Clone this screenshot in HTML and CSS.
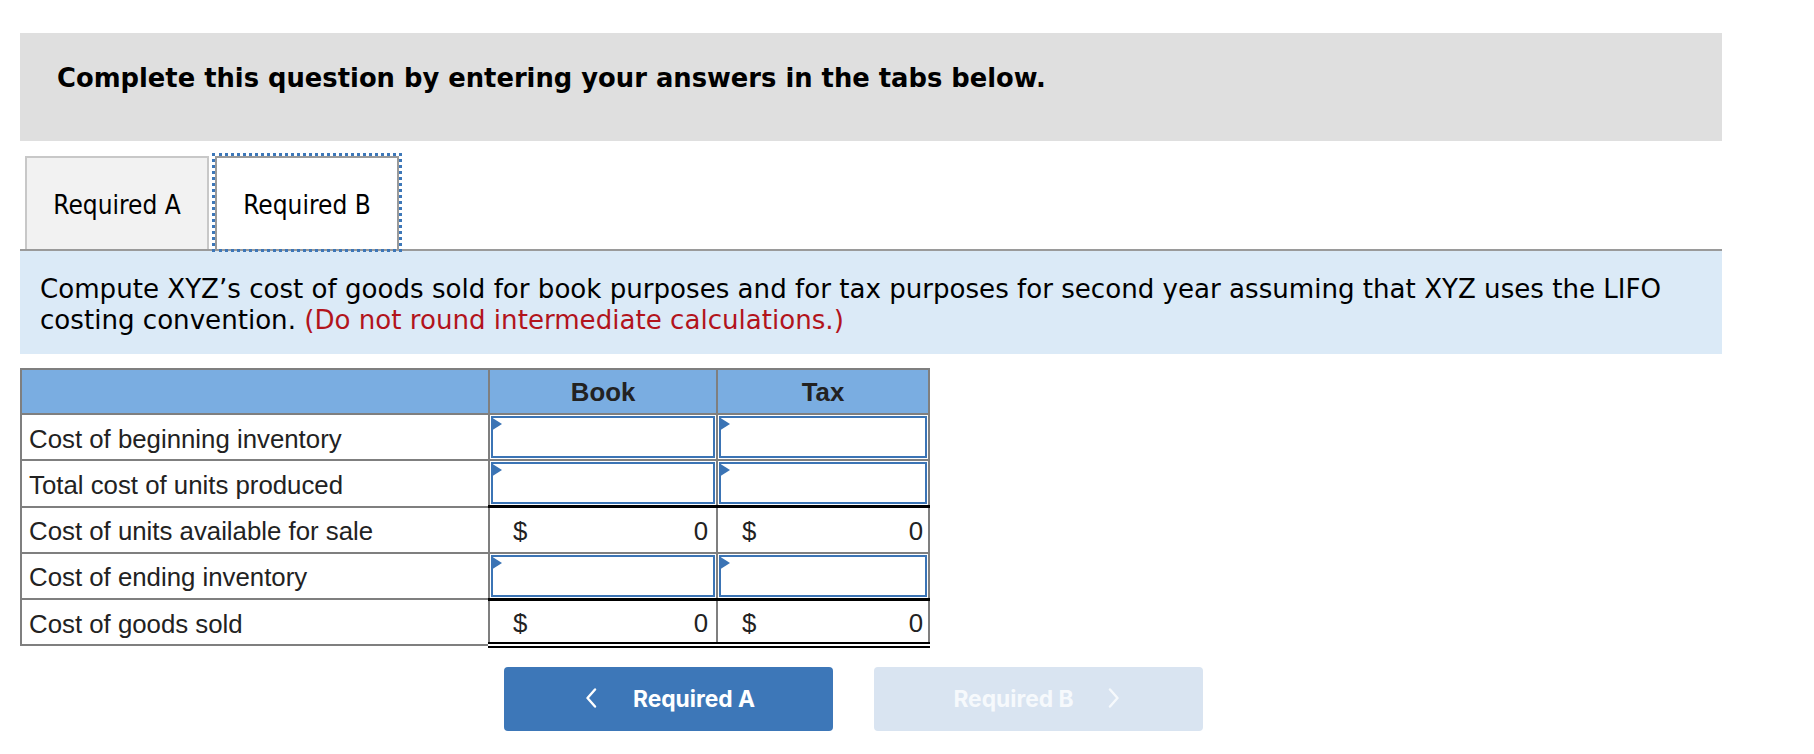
FILE: index.html
```html
<!DOCTYPE html>
<html lang="en">
<head>
<meta charset="utf-8">
<title>Required B</title>
<link rel="stylesheet" href="styles.css">
</head>
<body>
<div class="page">
  <div class="banner">Complete this question by entering your answers in the tabs below.</div>

  <div class="tabs">
    <div class="tab tab-inactive">Required A</div>
    <div class="tab tab-active">Required B</div>
  </div>

  <div class="instructions">
    Compute XYZ’s cost of goods sold for book purposes and for tax purposes for second year assuming that XYZ uses the LIFO costing convention. <span class="note">(Do not round intermediate calculations.)</span>
  </div>

  <table class="grid">
    <colgroup>
      <col class="c-label">
      <col class="c-book">
      <col class="c-tax">
    </colgroup>
    <thead>
      <tr class="head-row">
        <th></th>
        <th>Book</th>
        <th>Tax</th>
      </tr>
    </thead>
    <tbody>
      <tr>
        <td class="label">Cost of beginning inventory</td>
        <td class="in-cell"><div class="input"><span class="flag"></span></div></td>
        <td class="in-cell"><div class="input"><span class="flag"></span></div></td>
      </tr>
      <tr>
        <td class="label">Total cost of units produced</td>
        <td class="in-cell"><div class="input"><span class="flag"></span></div></td>
        <td class="in-cell"><div class="input"><span class="flag"></span></div></td>
      </tr>
      <tr>
        <td class="label">Cost of units available for sale</td>
        <td class="total book"><div class="amt"><span>$</span><span>0</span></div></td>
        <td class="total tax"><div class="amt"><span>$</span><span>0</span></div></td>
      </tr>
      <tr>
        <td class="label">Cost of ending inventory</td>
        <td class="in-cell"><div class="input"><span class="flag"></span></div></td>
        <td class="in-cell"><div class="input"><span class="flag"></span></div></td>
      </tr>
      <tr>
        <td class="label">Cost of goods sold</td>
        <td class="total final book"><div class="amt"><span>$</span><span>0</span></div></td>
        <td class="total final tax"><div class="amt"><span>$</span><span>0</span></div></td>
      </tr>
    </tbody>
  </table>

  <div class="nav">
    <button class="nav-btn prev" type="button">
      <svg class="chev" width="12" height="20" viewBox="0 0 12 20"><polyline points="10,1.5 2.5,10 10,18.5" fill="none" stroke="currentColor" stroke-width="2.4" stroke-linecap="round" stroke-linejoin="round"/></svg>
      <span>Required A</span>
    </button>
    <button class="nav-btn next" type="button">
      <span>Required B</span>
      <svg class="chev" width="12" height="20" viewBox="0 0 12 20"><polyline points="2,1.5 9.5,10 2,18.5" fill="none" stroke="currentColor" stroke-width="2.4" stroke-linecap="round" stroke-linejoin="round"/></svg>
    </button>
  </div>
</div>
</body>
</html>
```

FILE: styles.css
```css
* { box-sizing: border-box; }

html, body {
  margin: 0;
  padding: 0;
  background: #ffffff;
}

.page {
  width: 1722px;
  padding: 33px 0 0 20px;
}

.banner {
  height: 108px;
  background: #dfdfdf;
  display: flex;
  align-items: center;
  padding-left: 37px;
  padding-bottom: 18px;
  font-family: "DejaVu Sans", Verdana, sans-serif;
  font-weight: bold;
  font-size: 25.8px;
  color: #000;
}

.tabs {
  margin-top: 15px;
  display: flex;
  padding-left: 5px;
  border-bottom: 2px solid #9a9a9a;
  height: 95px;
}

.tab {
  width: 184px;
  height: 93px;
  display: flex;
  align-items: center;
  justify-content: center;
  font-family: "DejaVu Sans Condensed", "DejaVu Sans", Tahoma, sans-serif;
  font-size: 26px;
  color: #000;
  border: 2px solid #c8c8c8;
  border-bottom: none;
  padding-top: 2px;
}

.tab-inactive {
  background: #f2f2f2;
}

.tab-active {
  margin-left: 6px;
  background: #ffffff;
  border-color: #9a9a9a;
  outline: 3px dotted #3d77b8;
  position: relative;
  z-index: 1;
}

.instructions {
  background: #dbeaf7;
  padding: 23px 20px 18px 20px;
  font-family: "DejaVu Sans", Verdana, sans-serif;
  font-size: 26.1px;
  line-height: 31px;
  color: #000;
}

.note {
  color: #b2141c;
}

.grid {
  margin-top: 14px;
  border-collapse: collapse;
  width: 908px;
  table-layout: fixed;
  font-family: "Liberation Sans", Arial, Helvetica, sans-serif;
  font-size: 25.8px;
  color: #222;
}

.c-label { width: 468px; }
.c-book { width: 228px; }
.c-tax { width: 212px; }

.grid th,
.grid td {
  border: 2px solid #7f7f7f;
  padding: 0;
}

.head-row th {
  background: #7aade1;
  height: 45px;
  font-weight: bold;
  text-align: center;
  padding-top: 2px;
}

.grid td {
  height: 46px;
}

.label {
  padding-left: 7px !important;
  padding-top: 4px !important;
  white-space: nowrap;
}

.in-cell {
  padding: 1px !important;
}

.input {
  position: relative;
  height: 42px;
  border: 2px solid #3b74b5;
  background: #fff;
}

.flag {
  position: absolute;
  left: -2px;
  top: -1px;
  width: 0;
  height: 0;
  border-top: 7px solid transparent;
  border-bottom: 7px solid transparent;
  border-left: 11px solid #3b74b5;
}

.total {
  border-top: 3px solid #000 !important;
}

.total.final {
  border-bottom: 6px double #000 !important;
}

.amt {
  display: flex;
  justify-content: space-between;
  padding-top: 4px;
}

.book .amt {
  padding-left: 23px;
  padding-right: 8px;
}

.tax .amt {
  padding-left: 24px;
  padding-right: 5px;
}

.nav {
  margin-top: 19px;
  margin-left: 484px;
  display: flex;
  gap: 41px;
}

.nav-btn {
  width: 329px;
  height: 64px;
  border: none;
  border-radius: 4px;
  display: flex;
  align-items: center;
  justify-content: center;
  gap: 36px;
  font-family: Inter, "Noto Sans", sans-serif;
  font-weight: 700;
  font-size: 22.8px;
  padding: 0 0 2px 0;
}

.nav-btn.prev {
  background: #3d77b8;
  color: #ffffff;
  padding-left: 3px;
}

.nav-btn.next {
  background: #d9e4f1;
  color: #f6f9fc;
  gap: 34px;
  padding-right: 4px;
}

.chev {
  display: block;
}
```
